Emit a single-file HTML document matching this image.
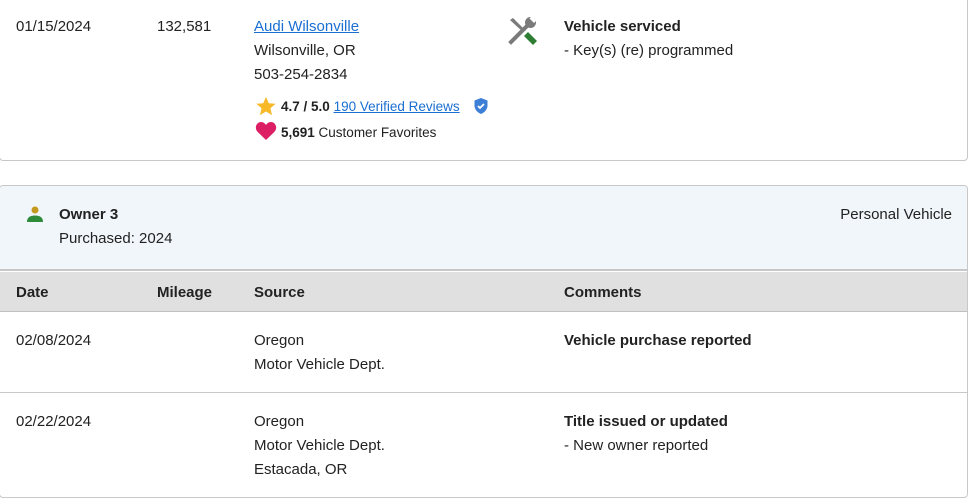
<!DOCTYPE html>
<html><head><meta charset="utf-8"><style>
*{margin:0;padding:0;box-sizing:border-box}
body{width:979px;height:498px;background:#fff;font-family:"Liberation Sans",Arial,sans-serif;color:#222;font-size:15px;position:relative;overflow:hidden}
.a{position:absolute;white-space:nowrap;line-height:24px}
.b{font-weight:bold}
.card{position:absolute;left:-1px;width:969px;border:1px solid #c8c8c8;border-radius:4px}
a{color:#1a6fd1;text-decoration:underline}
.sm{font-size:13.5px}
</style></head><body>
<div class="card" style="top:-10px;height:171px"></div>
<div class="a" style="left:16px;top:15px">01/15/2024</div>
<div class="a" style="left:157px;top:15px">132,581</div>
<div class="a" style="left:254px;top:15px"><a>Audi Wilsonville</a></div>
<div class="a" style="left:254px;top:39px">Wilsonville, OR</div>
<div class="a" style="left:254px;top:63px">503-254-2834</div>
<svg class="a" style="left:255px;top:95px" width="22" height="22" viewBox="0 0 24 24"><path d="M12 2l3 7 7.5.6-5.7 4.9 1.8 7.4L12 18l-6.6 3.9 1.8-7.4L1.5 9.6 9 9z" fill="#f7b928"/></svg>
<div class="a sm" style="left:281px;top:95px"><span class="b">4.7 / 5.0</span> <a>190 Verified Reviews</a></div>
<svg class="a" style="left:473px;top:97px" width="16" height="18" viewBox="0 0 16 18"><path d="M8 1l6.5 2.5v5c0 4-3 7-6.5 8.5C4.5 15.5 1.5 12.5 1.5 8.5v-5z" fill="#3d7fd6"/><path d="M5 9l2 2 4-4" stroke="#fff" stroke-width="1.8" fill="none"/></svg>
<svg class="a" style="left:255px;top:121px" width="22" height="20" viewBox="0 0 22 20"><path d="M11 19L2.5 10.8C-1 7 1.5 1 6 1c2.3 0 4 1.4 5 3 1-1.6 2.7-3 5-3 4.5 0 7 6 3.5 9.8z" fill="#dc1e64"/></svg>
<div class="a sm" style="left:281px;top:121px"><span class="b">5,691</span> Customer Favorites</div>
<svg class="a" style="left:507px;top:16px" width="32" height="30" viewBox="0 0 32 30">
<path d="M4 26L21 9" stroke="#7a7a7a" stroke-width="4" stroke-linecap="square"/>
<circle cx="23.5" cy="6.5" r="5.5" fill="#7a7a7a"/>
<path d="M25 0L29.5 4.5 27 7 22.5 2.5z" fill="#fff"/>
<path d="M3 4l3-2 12 12-2 2z" fill="#7a7a7a"/>
<path d="M21 16l9 9-4 4-9-9z" fill="#2e7d32"/>
</svg>
<div class="a b" style="left:564px;top:15px">Vehicle serviced</div>
<div class="a" style="left:564px;top:39px">- Key(s) (re) programmed</div>

<div class="card" style="top:185px;height:313px;overflow:hidden">
 <div style="position:absolute;left:0;top:0;right:0;height:85px;background:#f1f6fa;border-bottom:2px solid #c8c8c8"></div>
 <div style="position:absolute;left:0;top:86px;right:0;height:40px;background:#e0e0e0;border-bottom:1px solid #c0c0c0"></div>
 <div style="position:absolute;left:0;top:206px;right:0;height:1px;background:#c8c8c8"></div>
</div>
<svg class="a" style="left:26px;top:205px" width="18" height="18" viewBox="0 0 18 18"><circle cx="9" cy="5" r="3.5" fill="#c49a1e"/><path d="M1 17c0-5 3.5-6.5 8-6.5s8 1.5 8 6.5z" fill="#2e8b3a"/></svg>
<div class="a b" style="left:59px;top:203px">Owner 3</div>
<div class="a" style="left:59px;top:227px">Purchased: 2024</div>
<div class="a" style="right:27px;top:203px">Personal Vehicle</div>
<div class="a b" style="left:16px;top:281px">Date</div>
<div class="a b" style="left:157px;top:281px">Mileage</div>
<div class="a b" style="left:254px;top:281px">Source</div>
<div class="a b" style="left:564px;top:281px">Comments</div>
<div class="a" style="left:16px;top:329px">02/08/2024</div>
<div class="a" style="left:254px;top:329px">Oregon</div>
<div class="a" style="left:254px;top:353px">Motor Vehicle Dept.</div>
<div class="a b" style="left:564px;top:329px">Vehicle purchase reported</div>
<div class="a" style="left:16px;top:410px">02/22/2024</div>
<div class="a" style="left:254px;top:410px">Oregon</div>
<div class="a" style="left:254px;top:434px">Motor Vehicle Dept.</div>
<div class="a" style="left:254px;top:458px">Estacada, OR</div>
<div class="a b" style="left:564px;top:410px">Title issued or updated</div>
<div class="a" style="left:564px;top:434px">- New owner reported</div>
</body></html>
